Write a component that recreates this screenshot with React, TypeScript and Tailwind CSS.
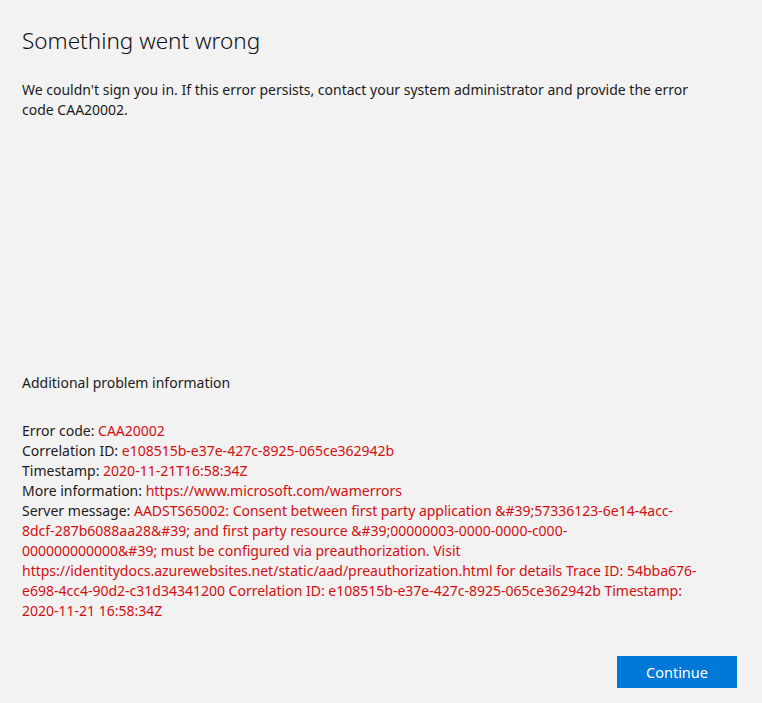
export default function App() {
  const red = "text-[#d40f0f]";
  return (
    <div className="w-[762px] h-[703px] bg-[#f2f2f2] text-[#1b1b1b] flex flex-col px-[22px] pt-[25px] pb-[15px] font-['Noto_Sans',sans-serif] text-[14px] leading-[20px] overflow-hidden">
      <h1 className="text-[22.5px] leading-[32px] font-light text-[#111] whitespace-nowrap">Something went wrong</h1>
      <p className="mt-[23px] whitespace-nowrap">
        We couldn't sign you in. If this error persists, contact your system administrator and provide the error
        <br />
        code CAA20002.
      </p>
      <div className="flex-1" />
      <p className="whitespace-nowrap">Additional problem information</p>
      <div className="mt-[28px] whitespace-nowrap">
        <div>Error code: <span className={red}>CAA20002</span></div>
        <div>Correlation ID: <span className={red}>e108515b-e37e-427c-8925-065ce362942b</span></div>
        <div>Timestamp: <span className={red}>2020-11-21T16:58:34Z</span></div>
        <div>More information: <span className={red}>https://www.microsoft.com/wamerrors</span></div>
        <div>
          Server message: <span className={red}>AADSTS65002: Consent between first party application &amp;#39;57336123-6e14-4acc-</span>
        </div>
        <div className={red}>8dcf-287b6088aa28&amp;#39; and first party resource &amp;#39;00000003-0000-0000-c000-</div>
        <div className={red}>000000000000&amp;#39; must be configured via preauthorization. Visit</div>
        <div className={red}>https://identitydocs.azurewebsites.net/static/aad/preauthorization.html for details Trace ID: 54bba676-</div>
        <div className={red}>e698-4cc4-90d2-c31d34341200 Correlation ID: e108515b-e37e-427c-8925-065ce362942b Timestamp:</div>
        <div className={red}>2020-11-21 16:58:34Z</div>
      </div>
      <div className="mt-[35px] flex justify-end pr-[3px]">
        <button className="w-[120px] h-[32px] bg-[#0078d7] text-white text-[14.5px]">Continue</button>
      </div>
    </div>
  );
}
